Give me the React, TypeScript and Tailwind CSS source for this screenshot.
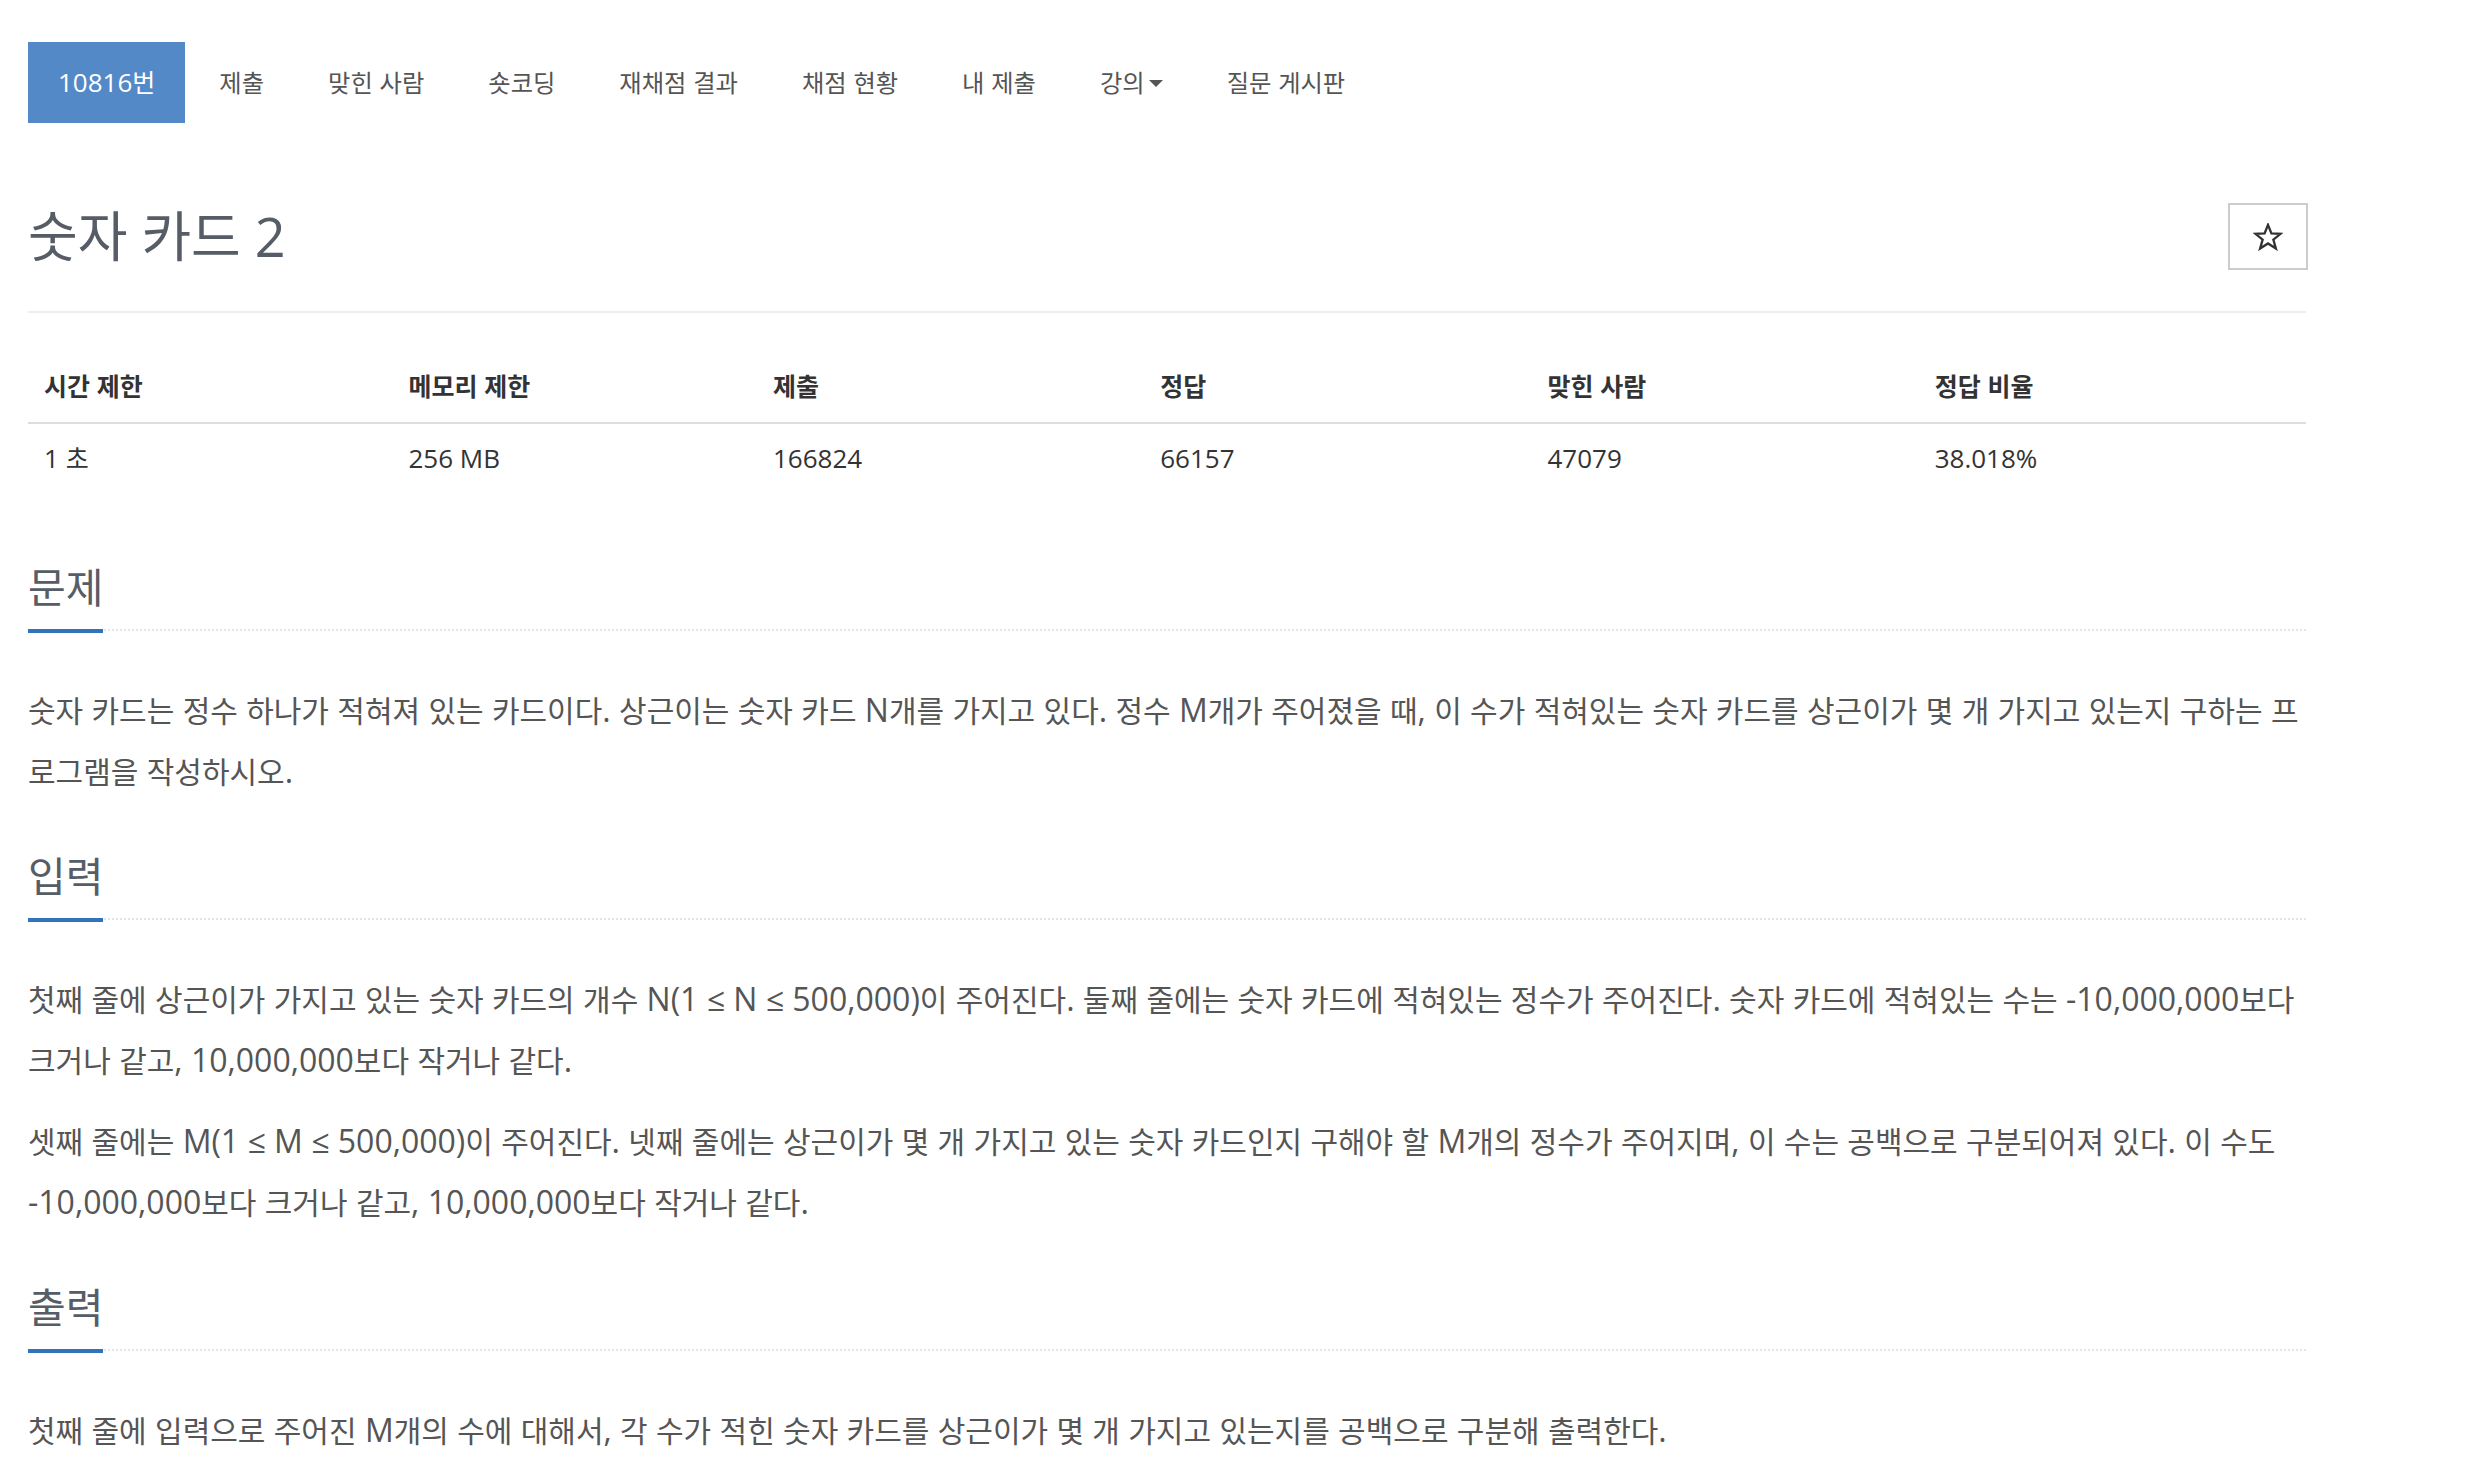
import React from "react";

const HANGUL = /([\uAC00-\uD7A3]+)/;

function Mix({ text, k }: { text: string; k: string }) {
  const parts = text.split(HANGUL);
  return (
    <>
      {parts.map((p, i) =>
        p === "" ? null : i % 2 === 1 ? (
          <span key={i} className={k}>
            {p}
          </span>
        ) : (
          <span key={i}>{p}</span>
        )
      )}
    </>
  );
}

const NAV = ["제출", "맞힌 사람", "숏코딩", "재채점 결과", "채점 현황", "내 제출", "강의", "질문 게시판"];

const HEADS = ["시간 제한", "메모리 제한", "제출", "정답", "맞힌 사람", "정답 비율"];
const VALS = ["1 초", "256 MB", "166824", "66157", "47079", "38.018%"];

const HK = "text-[30px]";

function Headline({ title, first }: { title: string; first?: boolean }) {
  return (
    <div
      className={
        first
          ? "mt-[59px] flex border-b-2 border-dotted border-[#e1e6ee]"
          : "mt-[42px] flex border-b-2 border-dotted border-[#e1e6ee]"
      }
    >
      <h2 className="-mb-[4px] border-b-4 border-[#3274bb] pb-[10px] text-[41px] font-normal leading-[64px] text-[#565d66]">
        {title}
      </h2>
    </div>
  );
}

function Para({ text }: { text: string }) {
  const parts = text.split(/(-10,000,000)/);
  return (
    <p className="break-all text-[32px] leading-[60px] text-[#555]">
      {parts.map((p, i) =>
        i % 2 === 1 ? (
          <span key={i} className="whitespace-nowrap">
            {p}
          </span>
        ) : (
          <Mix key={i} text={p} k={HK} />
        )
      )}
    </p>
  );
}

export default function App() {
  return (
    <div
      className="min-h-screen bg-white"
      style={{ fontFamily: '"Open Sans", "Noto Sans CJK KR", sans-serif' }}
    >
      <div className="ml-[28px] w-[2278px] pt-[42px]">
        {/* nav pills */}
        <ul className="flex">
          <li>
            <a className="block bg-[#5489c7] px-[30px] py-[20px] text-[26px] leading-[41px] text-white">
              <Mix text="10816번" k="text-[25px]" />
            </a>
          </li>
          {NAV.map((n) => (
            <li key={n} className="ml-[4px]">
              <a className="flex items-center px-[30px] py-[20px] text-[26px] leading-[41px] text-[#555]">
                <span>
                  <Mix text={n} k="text-[24.3px]" />
                </span>
                {n === "강의" && (
                  <span className="ml-[4px] mt-[2px] inline-block h-0 w-0 border-x-[7px] border-t-[7px] border-x-transparent border-t-[#555]" />
                )}
              </a>
            </li>
          ))}
        </ul>

        {/* title */}
        <div className="mt-[80px] flex items-center justify-between border-b-2 border-[#eee] pb-[41px]">
          <h1 className="text-[54px] font-normal leading-[67px] text-[#565d66]">숫자 카드 2</h1>
          <button className="-mr-[2px] flex h-[67px] w-[80px] items-center justify-center border-2 border-[#ccc] bg-white">
            <svg width="30" height="28" viewBox="0 0 24 23" fill="none">
              <polygon
                points="12,1.5 14.8,8.6 22.3,8.9 16.4,13.6 18.5,21 12,16.8 5.5,21 7.6,13.6 1.7,8.9 9.2,8.6"
                stroke="#333"
                strokeWidth="1.9"
                strokeLinejoin="miter"
              />
            </svg>
          </button>
        </div>

        {/* info table */}
        <table className="mt-[37px] w-full table-fixed border-collapse text-[#333]">
          <colgroup>
            <col className="w-[16%]" />
            <col className="w-[16%]" />
            <col className="w-[17%]" />
            <col className="w-[17%]" />
            <col className="w-[17%]" />
            <col className="w-[17%]" />
          </colgroup>
          <thead>
            <tr>
              {HEADS.map((h) => (
                <th
                  key={h}
                  className="border-b-2 border-[#ddd] px-[16px] py-[16px] text-left text-[26px] font-bold leading-[40px]"
                >
                  <Mix text={h} k="text-[25px]" />
                </th>
              ))}
            </tr>
          </thead>
          <tbody>
            <tr>
              {VALS.map((v) => (
                <td key={v} className="px-[16px] pb-[18px] pt-[14px] text-[26px] leading-[40px]">
                  <Mix text={v} k="text-[25px]" />
                </td>
              ))}
            </tr>
          </tbody>
        </table>

        {/* 문제 */}
        <section>
          <Headline title="문제" first />
          <div className="mt-[49px] flex flex-col gap-[20px]">
            <Para text="숫자 카드는 정수 하나가 적혀져 있는 카드이다. 상근이는 숫자 카드 N개를 가지고 있다. 정수 M개가 주어졌을 때, 이 수가 적혀있는 숫자 카드를 상근이가 몇 개 가지고 있는지 구하는 프로그램을 작성하시오." />
          </div>
        </section>

        {/* 입력 */}
        <section>
          <Headline title="입력" />
          <div className="mt-[49px] flex flex-col gap-[20px]">
            <Para text="첫째 줄에 상근이가 가지고 있는 숫자 카드의 개수 N(1 ≤ N ≤ 500,000)이 주어진다. 둘째 줄에는 숫자 카드에 적혀있는 정수가 주어진다. 숫자 카드에 적혀있는 수는 -10,000,000보다 크거나 같고, 10,000,000보다 작거나 같다." />
            <Para text="셋째 줄에는 M(1 ≤ M ≤ 500,000)이 주어진다. 넷째 줄에는 상근이가 몇 개 가지고 있는 숫자 카드인지 구해야 할 M개의 정수가 주어지며, 이 수는 공백으로 구분되어져 있다. 이 수도 -10,000,000보다 크거나 같고, 10,000,000보다 작거나 같다." />
          </div>
        </section>

        {/* 출력 */}
        <section className="pb-[40px]">
          <Headline title="출력" />
          <div className="mt-[49px] flex flex-col gap-[20px]">
            <Para text="첫째 줄에 입력으로 주어진 M개의 수에 대해서, 각 수가 적힌 숫자 카드를 상근이가 몇 개 가지고 있는지를 공백으로 구분해 출력한다." />
          </div>
        </section>
      </div>
    </div>
  );
}
